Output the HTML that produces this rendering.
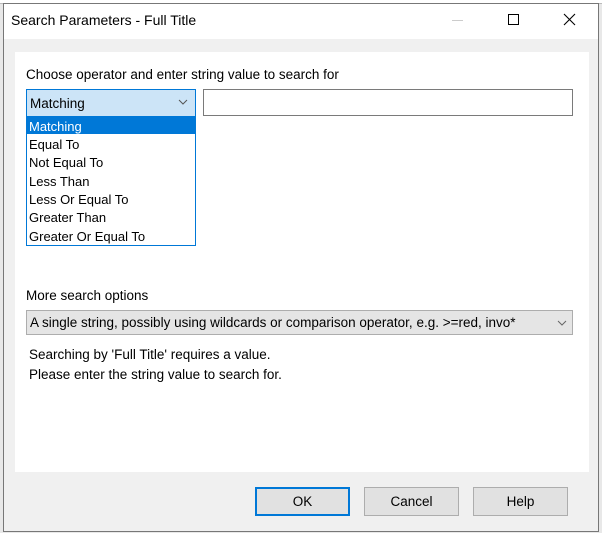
<!DOCTYPE html>
<html><head><style>
*{margin:0;padding:0;box-sizing:border-box}
body{width:602px;height:533px;background:#e8e8e8;position:relative;overflow:hidden;font-family:"Liberation Sans",sans-serif;font-size:13.5px;color:#000}
.a{position:absolute}
.l{font-size:13px;line-height:15px;left:29px}
</style></head><body>
<div class="a" style="left:0;top:0;width:602px;height:4px;background:#fff;border-bottom:1px solid #bbb"></div>
<div class="a" style="left:3px;top:3px;width:596px;height:529px;background:#f0f0f0;border:1px solid #777"></div>
<div class="a" style="left:4px;top:4px;width:594px;height:35px;background:#fff"></div>
<div class="a" style="left:11px;top:12px;font-size:14px;color:#000">Search Parameters - Full Title</div>
<div class="a" style="left:452px;top:20px;width:11px;height:1px;background:#ccc"></div>
<div class="a" style="left:508px;top:14px;width:11px;height:11px;border:1px solid #000"></div>
<svg class="a" style="left:563px;top:13px" width="13" height="13"><path d="M1 1L12 12M12 1L1 12" stroke="#000" stroke-width="1.1"/></svg>
<div class="a" style="left:15px;top:52px;width:574px;height:420px;background:#fff"></div>
<div class="a" style="left:26px;top:67px">Choose operator and enter string value to search for</div>
<div class="a" style="left:26px;top:89px;width:170px;height:28px;background:#cce4f7;border:1px solid #0078d7"></div>
<div class="a" style="left:30px;top:96px">Matching</div>
<svg class="a" style="left:178px;top:99px" width="10" height="7"><path d="M1 1L5 5L9 1" stroke="#555" fill="none"/></svg>
<div class="a" style="left:203px;top:89px;width:370px;height:27px;border:1px solid #7a7a7a;background:#fff"></div>
<div class="a" style="left:26px;top:117px;width:170px;height:129px;border:1px solid #0078d7;background:#fff"></div>
<div class="a" style="left:27px;top:117px;width:168px;height:17px;background:#0078d7"></div>
<div class="a l" style="top:119px;color:#fff">Matching</div>
<div class="a l" style="top:137px">Equal To</div>
<div class="a l" style="top:155px">Not Equal To</div>
<div class="a l" style="top:174px">Less Than</div>
<div class="a l" style="top:192px">Less Or Equal To</div>
<div class="a l" style="top:210px">Greater Than</div>
<div class="a l" style="top:229px">Greater Or Equal To</div>
<div class="a" style="left:26px;top:288px">More search options</div>
<div class="a" style="left:26px;top:310px;width:547px;height:25px;background:#e5e5e5;border:1px solid #adadad"></div>
<div class="a" style="left:30px;top:315px">A single string, possibly using wildcards or comparison operator, e.g. &gt;=red, invo*</div>
<svg class="a" style="left:557px;top:320px" width="10" height="7"><path d="M1 1L5 5L9 1" stroke="#666" fill="none"/></svg>
<div class="a" style="left:29px;top:347px">Searching by 'Full Title' requires a value.</div>
<div class="a" style="left:29px;top:367px">Please enter the string value to search for.</div>
<div class="a" style="left:255px;top:487px;width:95px;height:29px;background:#e1e1e1;border:2px solid #0078d7;text-align:center;line-height:25px">OK</div>
<div class="a" style="left:364px;top:487px;width:95px;height:29px;background:#e1e1e1;border:1px solid #adadad;text-align:center;line-height:27px">Cancel</div>
<div class="a" style="left:473px;top:487px;width:95px;height:29px;background:#e1e1e1;border:1px solid #adadad;text-align:center;line-height:27px">Help</div>
</body></html>
